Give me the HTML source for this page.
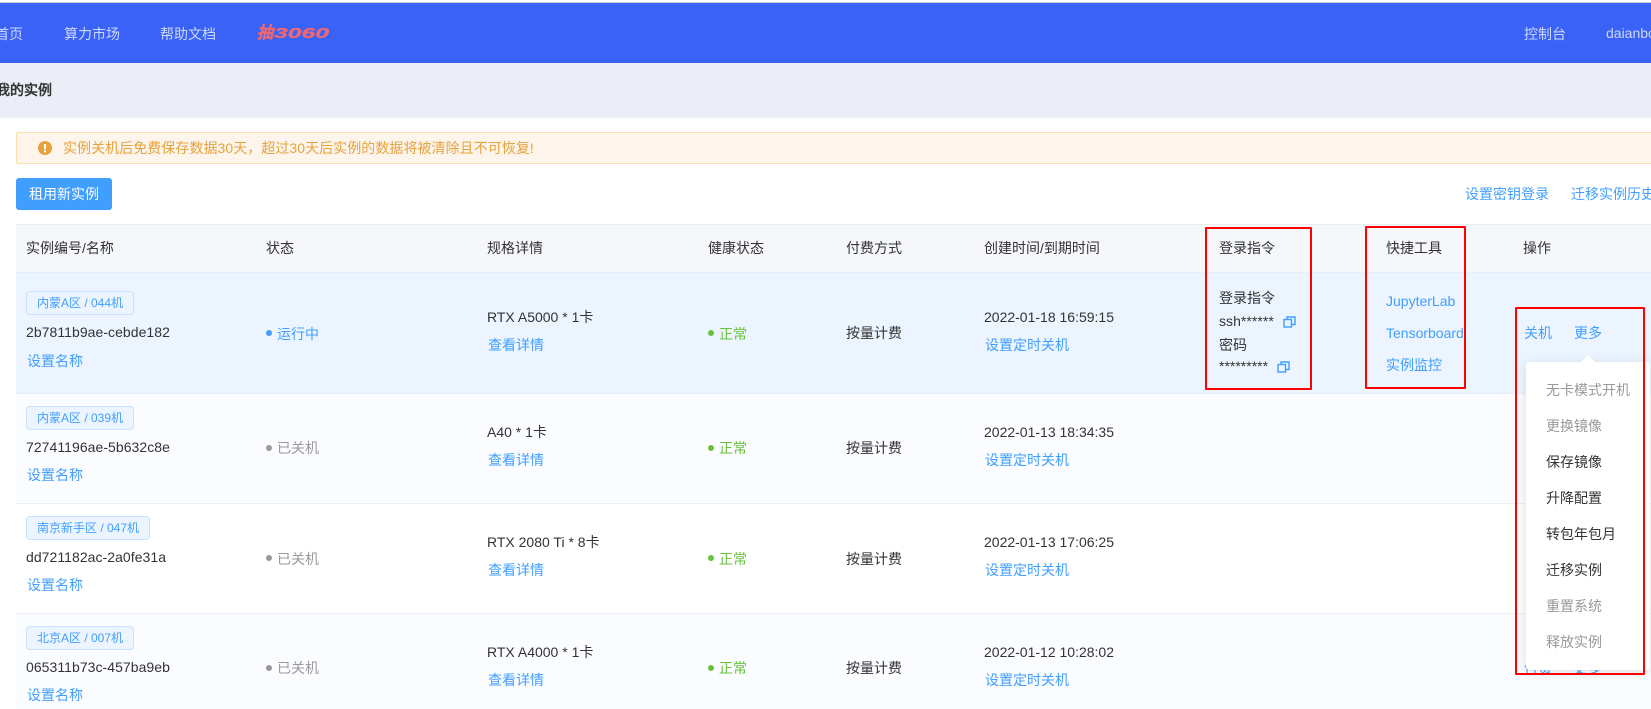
<!DOCTYPE html>
<html lang="zh">
<head>
<meta charset="utf-8">
<style>
html,body{margin:0;padding:0;width:1651px;height:709px;overflow:hidden;background:#fff}
body{position:relative;font-family:"Liberation Sans","WenQuanYi Zen Hei",sans-serif;font-size:14px;color:#333}
.b{position:absolute}
.t{position:absolute;line-height:20px;white-space:nowrap}
.l{color:#409eff}
.n{color:#cdd8fd}
.g{color:#67c23a}
.o{color:#999}
.tag{position:absolute;height:22px;line-height:22px;padding:0 10px;font-size:12px;color:#409eff;background:#ecf5ff;border:1px solid #c6e2ff;border-radius:4px;white-space:nowrap}
.d{position:absolute;width:6px;height:6px;border-radius:50%}
.r{position:absolute;border:2px solid #f00;box-sizing:border-box;border-radius:1px}
.h{color:#333}
.i{letter-spacing:.05px}
</style>
</head>
<body>
<div class="b" style="left:0;top:0;width:1651px;height:3px;background:#fff"></div>
<div class="b" style="left:0;top:2px;width:1651px;height:1px;background:#ccc"></div>
<div class="b" style="left:0;top:3px;width:1651px;height:60px;background:#3a62f7"></div>
<div class="t n" style="left:-5px;top:24px">首页</div>
<div class="t n" style="left:64px;top:24px">算力市场</div>
<div class="t n" style="left:160px;top:24px">帮助文档</div>
<div class="t" style="left:257px;top:24px;font-weight:bold;font-style:italic;font-size:16px;color:#f0676f;-webkit-text-stroke:.4px #f0676f">抽</div>
<div class="t" style="left:274px;top:24px;font-weight:bold;font-style:italic;font-size:15px;color:#f0676f;-webkit-text-stroke:.3px #f0676f;transform:scaleX(1.65);transform-origin:left center">3060</div>
<div class="t n" style="left:1524px;top:24px">控制台</div>
<div class="t n" style="left:1606px;top:23px">daianbo</div>

<div class="b" style="left:0;top:63px;width:1651px;height:55px;background:#ebeef7"></div>
<div class="t" style="left:-4px;top:80px;font-weight:bold">我的实例</div>

<div class="b" style="left:16px;top:132px;width:1640px;height:32px;box-sizing:border-box;background:#fdf5eb;border:1px solid #fbdfad;border-radius:2px"></div>
<svg class="b" style="left:38px;top:141px" width="14" height="14" viewBox="0 0 14 14"><circle cx="7" cy="7" r="7" fill="#e6a23c"/><rect x="6" y="3" width="2" height="5.2" fill="#fff"/><rect x="6" y="9.3" width="2" height="2" fill="#fff"/></svg>
<div class="t" style="left:63px;top:138px;color:#e6a23c;letter-spacing:.05px">实例关机后免费保存数据30天，超过30天后实例的数据将被清除且不可恢复!</div>

<div class="b" style="left:16px;top:178px;width:96px;height:32px;line-height:32px;text-align:center;background:#409eff;color:#fff;border-radius:3px">租用新实例</div>
<div class="t l" style="left:1465px;top:184px">设置密钥登录</div>
<div class="t l" style="left:1571px;top:184px">迁移实例历史</div>

<!-- table backgrounds -->
<div class="b" style="left:16px;top:224px;width:1635px;height:48px;background:#f5f7fb;border-top:1px solid #e9ecf3;box-sizing:border-box"></div>
<div class="b" style="left:16px;top:272px;width:1635px;height:122px;background:#ecf5ff;border-top:1px solid #e8eef6;border-bottom:1px solid #e8eef6;box-sizing:border-box"></div>
<div class="b" style="left:16px;top:394px;width:1635px;height:109px;background:#fbfcff"></div>
<div class="b" style="left:16px;top:503px;width:1635px;height:110px;background:#fff;border-top:1px solid #ebeef5;box-sizing:border-box"></div>
<div class="b" style="left:16px;top:613px;width:1635px;height:96px;background:#fbfcff;border-top:1px solid #ebeef5;box-sizing:border-box"></div>

<!-- header -->
<div class="t h" style="left:26px;top:238px">实例编号/名称</div>
<div class="t h" style="left:266px;top:238px">状态</div>
<div class="t h" style="left:487px;top:238px">规格详情</div>
<div class="t h" style="left:708px;top:238px">健康状态</div>
<div class="t h" style="left:846px;top:238px">付费方式</div>
<div class="t h" style="left:984px;top:238px">创建时间/到期时间</div>
<div class="t h" style="left:1219px;top:238px">登录指令</div>
<div class="t h" style="left:1386px;top:238px">快捷工具</div>
<div class="t h" style="left:1523px;top:238px">操作</div>

<!-- row 1 -->
<div class="tag" style="left:26px;top:291px">内蒙A区 / 044机</div>
<div class="t i" style="left:26px;top:322px">2b7811b9ae-cebde182</div>
<div class="t l" style="left:27px;top:351px">设置名称</div>
<div class="d" style="left:266px;top:330px;background:#409eff"></div>
<div class="t l" style="left:277px;top:324px">运行中</div>
<div class="t" style="left:487px;top:307px">RTX A5000 * 1卡</div>
<div class="t l" style="left:488px;top:335px">查看详情</div>
<div class="d" style="left:708px;top:330px;background:#67c23a"></div>
<div class="t g" style="left:719px;top:324px">正常</div>
<div class="t" style="left:846px;top:323px">按量计费</div>
<div class="t" style="left:984px;top:307px">2022-01-18 16:59:15</div>
<div class="t l" style="left:985px;top:335px">设置定时关机</div>
<div class="t" style="left:1219px;top:288px">登录指令</div>
<div class="t i" style="left:1219px;top:311px">ssh******</div>
<svg class="b" style="left:1283px;top:316px" width="13" height="12" viewBox="0 0 13 12" fill="none" stroke="#409eff" stroke-width="1.4"><rect x="1" y="3.5" width="7.5" height="7.5"/><path d="M4 3.5V1h8v7.5H8.5"/></svg>
<div class="t" style="left:1219px;top:335px">密码</div>
<div class="t" style="left:1219px;top:356px">*********</div>
<svg class="b" style="left:1277px;top:361px" width="13" height="12" viewBox="0 0 13 12" fill="none" stroke="#409eff" stroke-width="1.4"><rect x="1" y="3.5" width="7.5" height="7.5"/><path d="M4 3.5V1h8v7.5H8.5"/></svg>
<div class="t l" style="left:1386px;top:291px">JupyterLab</div>
<div class="t l" style="left:1386px;top:323px">Tensorboard</div>
<div class="t l" style="left:1386px;top:355px">实例监控</div>
<div class="t l" style="left:1524px;top:323px">关机</div>
<div class="t l" style="left:1574px;top:323px">更多</div>

<!-- row 2 -->
<div class="tag" style="left:26px;top:406px">内蒙A区 / 039机</div>
<div class="t i" style="left:26px;top:437px">72741196ae-5b632c8e</div>
<div class="t l" style="left:27px;top:465px">设置名称</div>
<div class="d" style="left:266px;top:445px;background:#999"></div>
<div class="t o" style="left:277px;top:438px">已关机</div>
<div class="t" style="left:487px;top:422px">A40 * 1卡</div>
<div class="t l" style="left:488px;top:450px">查看详情</div>
<div class="d" style="left:708px;top:445px;background:#67c23a"></div>
<div class="t g" style="left:719px;top:438px">正常</div>
<div class="t" style="left:846px;top:438px">按量计费</div>
<div class="t" style="left:984px;top:422px">2022-01-13 18:34:35</div>
<div class="t l" style="left:985px;top:450px">设置定时关机</div>

<!-- row 3 -->
<div class="tag" style="left:26px;top:516px">南京新手区 / 047机</div>
<div class="t i" style="left:26px;top:547px">dd721182ac-2a0fe31a</div>
<div class="t l" style="left:27px;top:575px">设置名称</div>
<div class="d" style="left:266px;top:555px;background:#999"></div>
<div class="t o" style="left:277px;top:549px">已关机</div>
<div class="t" style="left:487px;top:532px">RTX 2080 Ti * 8卡</div>
<div class="t l" style="left:488px;top:560px">查看详情</div>
<div class="d" style="left:708px;top:555px;background:#67c23a"></div>
<div class="t g" style="left:719px;top:549px">正常</div>
<div class="t" style="left:846px;top:549px">按量计费</div>
<div class="t" style="left:984px;top:532px">2022-01-13 17:06:25</div>
<div class="t l" style="left:985px;top:560px">设置定时关机</div>

<!-- row 4 -->
<div class="tag" style="left:26px;top:626px">北京A区 / 007机</div>
<div class="t i" style="left:26px;top:657px">065311b73c-457ba9eb</div>
<div class="t l" style="left:27px;top:685px">设置名称</div>
<div class="d" style="left:266px;top:665px;background:#999"></div>
<div class="t o" style="left:277px;top:658px">已关机</div>
<div class="t" style="left:487px;top:642px">RTX A4000 * 1卡</div>
<div class="t l" style="left:488px;top:670px">查看详情</div>
<div class="d" style="left:708px;top:665px;background:#67c23a"></div>
<div class="t g" style="left:719px;top:658px">正常</div>
<div class="t" style="left:846px;top:658px">按量计费</div>
<div class="t" style="left:984px;top:642px">2022-01-12 10:28:02</div>
<div class="t l" style="left:985px;top:670px">设置定时关机</div>
<div class="t l" style="left:1524px;top:658px">付费</div>
<div class="t l" style="left:1574px;top:658px">更多</div>

<!-- dropdown -->
<div class="b" style="left:1526px;top:362px;width:124px;height:308px;background:#fff;border-radius:4px;box-shadow:0 2px 12px rgba(0,0,0,.12)"></div>
<div class="b" style="left:1583px;top:357px;width:10px;height:10px;background:#fff;transform:rotate(45deg)"></div>
<div class="t o" style="left:1546px;top:380px">无卡模式开机</div>
<div class="t o" style="left:1546px;top:416px">更换镜像</div>
<div class="t" style="left:1546px;top:452px">保存镜像</div>
<div class="t" style="left:1546px;top:488px">升降配置</div>
<div class="t" style="left:1546px;top:524px">转包年包月</div>
<div class="t" style="left:1546px;top:560px">迁移实例</div>
<div class="t o" style="left:1546px;top:596px">重置系统</div>
<div class="t o" style="left:1546px;top:632px">释放实例</div>

<!-- red boxes -->
<div class="r" style="left:1205px;top:227px;width:107px;height:163px"></div>
<div class="r" style="left:1365px;top:226px;width:101px;height:163px"></div>
<div class="r" style="left:1515px;top:307px;width:130px;height:368px"></div>
</body>
</html>
